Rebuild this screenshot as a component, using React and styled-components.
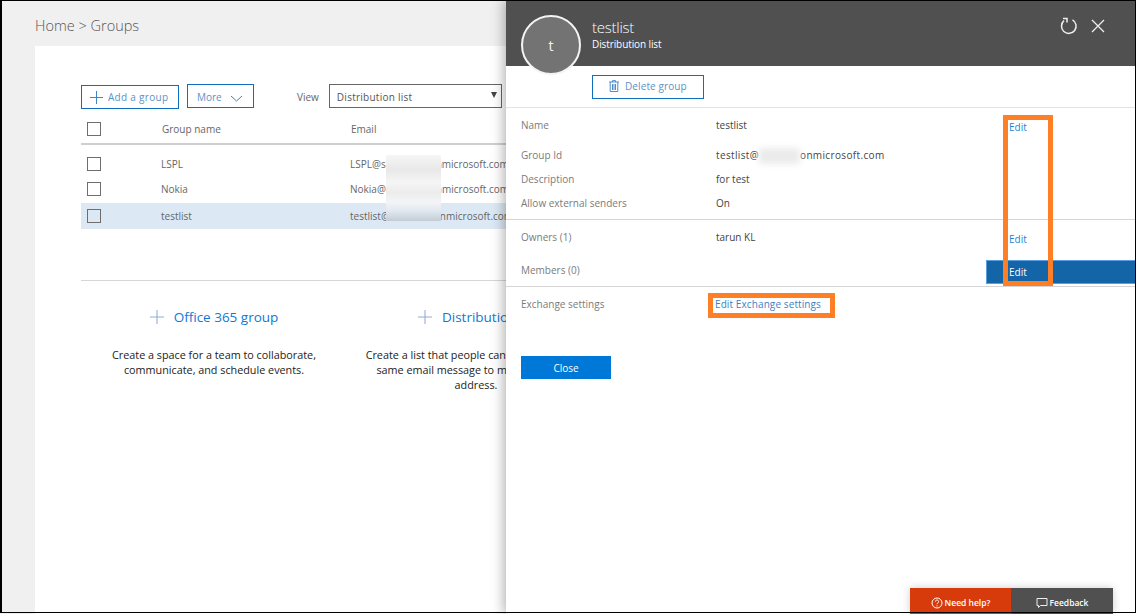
import React from "react";
import styled, { createGlobalStyle } from "styled-components";

const Global = createGlobalStyle`
  html, body { margin: 0; padding: 0; width: 1136px; height: 614px; overflow: hidden; background: #fff; }
  * { box-sizing: border-box; }
  body { font-family: "Open Sans", "Noto Sans", "Liberation Sans", sans-serif; }
`;

const Stage = styled.div`
  position: relative;
  width: 1136px;
  height: 614px;
  overflow: hidden;
  background: #f0f0f0;
`;
const Frame = styled.div`
  position: absolute;
  inset: 0 0 1px 0;
  border: 1px solid #000;
  border-left-width: 2px;
  z-index: 20;
  pointer-events: none;
`;
const Page = styled.div`
  display: flex;
  flex-direction: column;
  height: 100%;
  padding: 16px 0 0 35px;
`;
const Crumb = styled.div`
  font-size: 14.5px;
  font-weight: 300;
  line-height: 20px;
  color: #555;
  height: 30px;
`;
const Card = styled.div`
  flex: 1;
  background: #fff;
  padding: 38px 0 0 46px;
`;
const Toolbar = styled.div`
  display: flex;
  align-items: flex-start;
  height: 37px;
  width: 425px;
`;
const OutlineButton = styled.div`
  display: flex;
  align-items: center;
  height: ${(p) => p.$h || 24}px;
  width: ${(p) => p.$w}px;
  margin-top: ${(p) => p.$top || 0}px;
  margin-right: ${(p) => p.$mr || 0}px;
  padding: ${(p) => p.$pt || 0}px 0 ${(p) => p.$pb || 0}px ${(p) => p.$pl || 0}px;
  gap: ${(p) => p.$gap || 0}px;
  border: 1px solid #106ebe;
  color: #5b93c9;
  font-size: 10px;
  letter-spacing: ${(p) => p.$ls || 0}px;
  background: #fff;
`;
const ChevronWrap = styled.span`
  display: flex;
  margin-top: 4px;
`;
const ViewLabel = styled.span`
  font-size: 10px;
  color: #666;
  margin: 6px 10px 0 43px;
`;
const SelectBox = styled.div`
  display: flex;
  align-items: center;
  justify-content: space-between;
  width: 173px;
  height: 24px;
  padding: 1px 4px 0 7px;
  border: 1px solid #666;
  color: #555;
  font-size: 10px;
  letter-spacing: 0.25px;
`;
const Arrow = styled.span`
  width: 0;
  height: 0;
  border-left: 3px solid transparent;
  border-right: 3px solid transparent;
  border-top: 6px solid #444;
  margin-top: -3px;
`;
const TableRow = styled.div`
  display: grid;
  grid-template-columns: ${(p) => (p.$head ? "81px 189px" : "80px 189px")} 1fr;
  align-items: center;
  width: 425px;
  height: ${(p) => p.$h}px;
  margin-top: ${(p) => (p.$sel ? 2 : 0)}px;
  padding-bottom: ${(p) => (p.$head ? 6 : 0)}px;
  background: ${(p) => (p.$sel ? "#dce9f4" : "transparent")};
  border-bottom: ${(p) => (p.$head ? "2px solid #cfcfcf" : "none")};
  color: #666;
  font-size: 10px;
  white-space: nowrap;
  overflow: hidden;
`;
const Check = styled.span`
  display: block;
  width: 14px;
  height: 14px;
  margin-left: 6px;
  border: 1px solid #6e6e6e;
`;
const TableBody = styled.div`
  padding-top: 6px;
`;
const EmailGap = styled.span`
  display: inline-block;
  width: ${(p) => p.$w}px;
`;
const Divider = styled.div`
  width: 425px;
  height: 1px;
  background: #d6d6d6;
  margin-top: 51px;
`;
const Offers = styled.div`
  display: flex;
  width: 425px;
  padding-top: 26px;
  overflow: hidden;
`;
const Offer = styled.div`
  flex: 0 0 ${(p) => p.$w}px;
  margin-left: ${(p) => p.$ml || 0}px;
  display: flex;
  flex-direction: column;
  align-items: center;
  white-space: nowrap;
`;
const OfferTitle = styled.div`
  display: flex;
  align-items: center;
  gap: 10px;
  height: 20px;
  margin-left: ${(p) => p.$ml || 0}px;
  font-size: 13.5px;
  color: #0f78d4;
`;
const OfferText = styled.div`
  margin-top: 20px;
  font-size: 10.8px;
  line-height: 15px;
  text-align: center;
  color: #222;
`;

const Panel = styled.div`
  position: absolute;
  top: 0;
  left: 506px;
  right: 0;
  bottom: 0;
  display: flex;
  flex-direction: column;
  background: #fff;
  box-shadow: -2px 0 12px rgba(0, 0, 0, 0.32);
  z-index: 5;
`;
const PanelHead = styled.div`
  display: flex;
  justify-content: space-between;
  flex: 0 0 66px;
  padding: 18px 31px 0 86px;
  background: #505050;
  color: #fff;
`;
const Avatar = styled.div`
  position: absolute;
  left: 15px;
  top: 15px;
  width: 60px;
  height: 60px;
  border-radius: 50%;
  display: flex;
  align-items: center;
  justify-content: center;
  background: #737373;
  border: 2px solid #f4f4f4;
  color: #f2f2f2;
  font-size: 14px;
`;
const HeadTitle = styled.div`
  font-size: 15px;
  font-weight: 300;
  line-height: 18px;
  letter-spacing: -0.25px;
`;
const HeadSub = styled.div`
  font-size: 10px;
  line-height: 16px;
  letter-spacing: -0.1px;
`;
const HeadIcons = styled.div`
  display: flex;
  gap: 13px;
  margin-top: -1px;
`;
const DeleteArea = styled.div`
  flex: 0 0 42px;
  padding: 9px 0 0 86px;
  border-bottom: 1px solid #e3e3e3;
`;
const Section = styled.div`
  border-bottom: ${(p) => (p.$line ? "1px solid #d4d4d4" : "none")};
  padding: ${(p) => p.$pad || "0"};
`;
const Row = styled.div`
  display: grid;
  grid-template-columns: 195px 1fr 150px;
  align-items: center;
  height: ${(p) => p.$h}px;
  margin-top: ${(p) => p.$top || 0}px;
  padding-left: 15px;
  font-size: 10px;
  white-space: nowrap;
`;
const Label = styled.span`
  color: #7b7b7b;
  padding-bottom: ${(p) => (p.$up ? 4 : 0)}px;
`;
const Value = styled.span`
  color: #444;
  letter-spacing: ${(p) => p.$ls || 0}px;
`;
const BlurPatch = styled.span`
  display: inline-block;
  width: ${(p) => p.$w}px;
  height: 16px;
  margin: -4px 0;
  vertical-align: middle;
  background: #ebebeb;
  filter: blur(3px);
`;
const EditLink = styled.span`
  align-self: stretch;
  display: flex;
  align-items: center;
  padding: ${(p) => (p.$solid ? 0 : 4)}px 0 0 23px;
  color: ${(p) => (p.$solid ? "#fff" : "#1d84d6")};
  background: ${(p) => (p.$solid ? "#1464a8" : "transparent")};
  outline: ${(p) => (p.$solid ? "1px solid #5b9ee0" : "none")};
  outline-offset: -1px;
`;
const Link = styled.span`
  color: #3b7fc4;
  margin-left: -1px;
  letter-spacing: 0.1px;
`;
const CloseButton = styled.div`
  display: flex;
  align-items: center;
  justify-content: center;
  width: 90px;
  height: 23px;
  margin: 35px 0 0 15px;
  background: #0078d7;
  color: #fff;
  font-size: 10px;
`;
const Blur = styled.div`
  position: absolute;
  left: 386px;
  top: 155px;
  width: 55px;
  height: 66px;
  background: linear-gradient(#f6f6f6, #e8e8e8 22%, #f5f5f5 42%, #ececec 56%, #f2f4f7 72%, #e2e9f0 84%, #c3ccd6);
  z-index: 2;
`;
const Highlight = styled.div`
  position: absolute;
  left: ${(p) => p.$x}px;
  top: ${(p) => p.$y}px;
  width: ${(p) => p.$w}px;
  height: ${(p) => p.$h}px;
  border: 5px solid #ff7f27;
  z-index: 10;
`;
const Floating = styled.div`
  position: absolute;
  left: 910px;
  top: 588px;
  display: flex;
  height: 26px;
  box-shadow: 0 0 8px rgba(0, 0, 0, 0.2);
  z-index: 10;
`;
const FloatButton = styled.div`
  display: flex;
  align-items: center;
  justify-content: center;
  gap: 2px;
  width: ${(p) => p.$w}px;
  background: ${(p) => p.$bg};
  color: #fff;
  font-size: 8.5px;
  font-weight: 600;
  padding-top: 3px;
`;

const Plus = ({ size = 13, color = "#3f86c8" }) => (
  <svg width={size} height={size} viewBox="0 0 13 13">
    <path d="M6.5 0v13M0 6.500h13" stroke={color} strokeWidth="1" fill="none" />
  </svg>
);

export default function App() {
  return (
    <Stage>
      <Global />
      <Page>
        <Crumb>Home &gt; Groups</Crumb>
        <Card>
          <Toolbar>
            <OutlineButton $w={98} $top={1} $mr={8} $pl={8} $gap={5} $ls={0.3}>
              <Plus />
              Add a group
            </OutlineButton>
            <OutlineButton $w={67} $pl={9} $pt={1} $gap={8}>
              More
              <ChevronWrap>
                <svg width="13" height="7" viewBox="0 0 13 7">
                  <path d="M1 1l5.500 5L12 1" stroke="#3f7fbe" fill="none" />
                </svg>
              </ChevronWrap>
            </OutlineButton>
            <ViewLabel>View</ViewLabel>
            <SelectBox>
              Distribution list
              <Arrow />
            </SelectBox>
          </Toolbar>
          <TableRow $h={24} $head>
            <Check />
            <span>Group name</span>
            <span>Email</span>
          </TableRow>
          <TableBody>
            <TableRow $h={25}>
              <Check />
              <span>LSPL</span>
              <span>
                LSPL@s
                <EmailGap $w={50} />
                nmicrosoft.com
              </span>
            </TableRow>
            <TableRow $h={25}>
              <Check />
              <span>Nokia</span>
              <span>
                Nokia@
                <EmailGap $w={50} />
                nmicrosoft.com
              </span>
            </TableRow>
            <TableRow $h={26} $sel>
              <Check />
              <span>testlist</span>
              <span>
                testlist@
                <EmailGap $w={50} />
                nmicrosoft.com
              </span>
            </TableRow>
          </TableBody>
          <Divider />
          <Offers>
            <Offer $w={264} $ml={1}>
              <OfferTitle>
                <Plus size={14} color="#93acd8" />
                Office 365 group
              </OfferTitle>
              <OfferText>
                Create a space for a team to collaborate,
                <br />
                communicate, and schedule events.
              </OfferText>
            </Offer>
            <Offer $w={264} $ml={-2}>
              <OfferTitle $ml={4}>
                <Plus size={14} color="#93acd8" />
                Distribution list
              </OfferTitle>
              <OfferText>
                Create a list that people can use to send the
                <br />
                same email message to multiple people
                <br />
                address.
              </OfferText>
            </Offer>
          </Offers>
        </Card>
      </Page>
      <Blur />
      <Panel>
        <PanelHead>
          <div>
            <HeadTitle>testlist</HeadTitle>
            <HeadSub>Distribution list</HeadSub>
          </div>
          <HeadIcons>
            <svg width="18" height="18" viewBox="0 0 18 18">
              <path d="M12.500 2.800A7.300 7.300 0 1 1 4 3.600" stroke="#eee" strokeWidth="1.500" fill="none" />
              <path d="M3 1.500h4v4" stroke="#eee" strokeWidth="1.500" fill="none" />
            </svg>
            <svg width="14" height="18" viewBox="0 0 14 18">
              <path d="M1 3l12 12M13 3L1 15" stroke="#eee" strokeWidth="1.300" fill="none" />
            </svg>
          </HeadIcons>
        </PanelHead>
        <Avatar>t</Avatar>
        <DeleteArea>
          <OutlineButton $w={112} $h={24} $pl={16} $pb={2} $gap={6} $ls={0.1}>
            <svg width="10" height="12" viewBox="0 0 10 12">
              <path
                d="M0 2h10M3.500 2V.6h3V2M1.200 2v9.500h7.600V2M3.500 4v6M5 4v6M6.500 4v6"
                stroke="#4d8fcb"
                fill="none"
              />
            </svg>
            Delete group
          </OutlineButton>
        </DeleteArea>
        <Section $line $pad="0 0 4px">
          <Row $h={34}>
            <Label>Name</Label>
            <Value>testlist</Value>
            <EditLink>Edit</EditLink>
          </Row>
          <Row $h={26}>
            <Label>Group Id</Label>
            <Value $ls={0.35}>
              testlist@
              <BlurPatch $w={41} />
              onmicrosoft.com
            </Value>
          </Row>
          <Row $h={22}>
            <Label>Description</Label>
            <Value>for test</Value>
          </Row>
          <Row $h={25}>
            <Label>Allow external senders</Label>
            <Value>On</Value>
          </Row>
        </Section>
        <Section $line $pad="0 0 2px">
          <Row $h={34}>
            <Label>Owners (1)</Label>
            <Value>tarun KL</Value>
            <EditLink>Edit</EditLink>
          </Row>
          <Row $h={24} $top={6}>
            <Label $up>Members (0)</Label>
            <span />
            <EditLink $solid>Edit</EditLink>
          </Row>
        </Section>
        <Row $h={34}>
          <Label>Exchange settings</Label>
          <Link>Edit Exchange settings</Link>
        </Row>
        <CloseButton>Close</CloseButton>
      </Panel>
      <Highlight $x={1003} $y={115} $w={50} $h={171} />
      <Highlight $x={708} $y={293} $w={127} $h={25} />
      <Floating>
        <FloatButton $w={101} $bg="#d83b0b">
          <svg width="12" height="12" viewBox="0 0 12 12">
            <circle cx="6" cy="6" r="5" stroke="#fff" fill="none" />
            <path d="M4.400 4.600a1.600 1.600 0 1 1 2.400 1.400c-.6.3-.8.6-.8 1.200M6 8.400v1" stroke="#fff" fill="none" />
          </svg>
          Need help?
        </FloatButton>
        <FloatButton $w={102} $bg="#505050">
          <svg width="12" height="12" viewBox="0 0 12 12">
            <path d="M1 1.500h10v7H4.500L2.500 10.500V8.500H1z" stroke="#eee" fill="none" />
          </svg>
          Feedback
        </FloatButton>
      </Floating>
      <Frame />
    </Stage>
  );
}
